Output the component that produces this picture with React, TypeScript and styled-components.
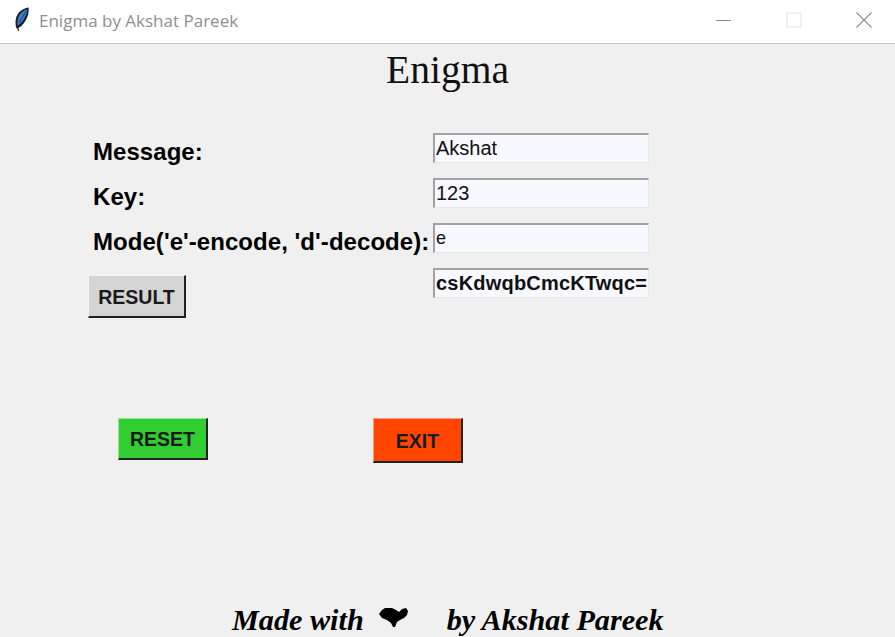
import { FC } from "react";
import styled, { createGlobalStyle } from "styled-components";

const fields = [
  { label: "Message:", value: "Akshat" },
  { label: "Key:", value: "123" },
  { label: "Mode('e'-encode, 'd'-decode):", value: "e", small: true },
];

const App: FC = () => {
  return (
    <Window>
      <GlobalStyle />
      <TitleBar>
        <Feather viewBox="0 0 14 24" aria-hidden="true">
          <path d="M2.500 20 3.500 24" stroke="#222" strokeWidth="1.200" fill="none" />
          <path d="M13.500.500C9 1 3.500 4.500 1.500 9.500.300 13 0 17.500 1.500 21.500L3.500 21C7.500 19 11 14 12.800 8.500c.7-2.500 1.200-5.500.7-8Z" fill="#1b1d26" />
          <path d="M12.300 2.500C9 3 5.200 5.800 3.500 10 2.400 12.800 2.200 15.800 2.700 18.500 6 16.500 9.300 12.500 11 8c.7-1.900 1.300-3.800 1.300-5.500Z" fill="#3d7bd0" />
          <path d="M11 4 4 16" stroke="#1c2f55" strokeWidth=".8" fill="none" />
        </Feather>
        <WindowTitle>Enigma by Akshat Pareek</WindowTitle>
        <WindowControls>
          <ControlButton>
            <svg width="16" height="16" viewBox="0 0 16 16" aria-hidden="true">
              <path d="M0 8.500H15" stroke="#8c8c8c" strokeWidth="1" />
            </svg>
          </ControlButton>
          <ControlButton>
            <svg width="16" height="16" viewBox="0 0 16 16" aria-hidden="true">
              <rect x="1" y="1" width="14" height="14" rx="1" fill="none" stroke="#e4e4e4" strokeWidth="1.200" />
            </svg>
          </ControlButton>
          <ControlButton>
            <svg width="16" height="16" viewBox="0 0 16 16" aria-hidden="true">
              <path d="M.5.500 15.500 15.500M15.500.500.500 15.500" stroke="#8c8c8c" strokeWidth="1.100" />
            </svg>
          </ControlButton>
        </WindowControls>
      </TitleBar>

      <Content>
        <Heading>Enigma</Heading>

        <Form>
          {fields.map((field) => (
            <FormRow key={field.label}>
              <FieldLabel>{field.label}</FieldLabel>
              <Field readOnly value={field.value} $small={field.small} />
            </FormRow>
          ))}
          <FormRow>
            <RaisedButton $width={98} $height={43} $bg="#d4d4d4" $light="#f4f4f4" $offset={7}>
              RESULT
            </RaisedButton>
            <ResultField readOnly value="csKdwqbCmcKTwqc=" />
          </FormRow>
        </Form>

        <ActionRow>
          <RaisedButton $width={90} $height={42} $bg="#32cd32" $light="#8fe98f">
            RESET
          </RaisedButton>
          <RaisedButton $width={90} $height={45} $bg="#ff4500" $light="#ff9c80">
            EXIT
          </RaisedButton>
        </ActionRow>

        <Footer>
          <span>Made with</span>
          <Heart viewBox="0 0 29 19" aria-hidden="true">
            <path d="M0 6 3 2 6 0H13L17 2 20 4 23 1 27 0 29 3 28 7 25 10 21 12 18 14 16 19H14L12 15 8 12 3 10Z" fill="#000" />
          </Heart>
          <span>by Akshat Pareek</span>
        </Footer>
      </Content>
    </Window>
  );
};

const GlobalStyle = createGlobalStyle`
  html, body {
    margin: 0;
    padding: 0;
    background: #f0f0f0;
  }
`;

const Window = styled.div`
  width: 895px;
  height: 637px;
  overflow: hidden;
  display: flex;
  flex-direction: column;
  background: #f0f0f0;
`;

const TitleBar = styled.div`
  height: 43px;
  flex-shrink: 0;
  display: flex;
  align-items: center;
  background: #fff;
  border-bottom: 1px solid #c8c8c8;
`;

const Feather = styled.svg`
  width: 14px;
  height: 24px;
  margin-left: 15px;
  margin-top: -5px;
`;

const WindowTitle = styled.span`
  margin-left: 10px;
  margin-top: -2px;
  font-family: "Open Sans", sans-serif;
  font-size: 17px;
  color: #8f8f8f;
`;

const WindowControls = styled.div`
  margin-left: auto;
  margin-right: -4px;
  display: flex;
`;

const ControlButton = styled.div`
  width: 70px;
  height: 16px;
  display: flex;
  justify-content: center;
  align-items: center;
  margin-top: -3px;
`;

const Content = styled.div`
  flex: 1;
  display: flex;
  flex-direction: column;
`;

const Heading = styled.h1`
  margin: 4px 0 0;
  text-align: center;
  font-family: "Liberation Serif", serif;
  font-size: 39.500px;
  line-height: 45px;
  font-weight: 400;
  color: #111;
`;

const Form = styled.div`
  margin: 40px 0 0 88px;
  display: flex;
  flex-direction: column;
`;

const FormRow = styled.div`
  height: 45px;
  display: flex;
`;

const FieldLabel = styled.label`
  width: 340px;
  margin-left: 5px;
  font-family: "Liberation Sans", sans-serif;
  font-size: 24px;
  font-weight: 700;
  letter-spacing: 0.05px;
  line-height: 38px;
  white-space: nowrap;
  color: #000;
`;

const Field = styled.input<{ $small?: boolean }>`
  box-sizing: border-box;
  width: 216px;
  height: 30px;
  padding: 0 0 0 1px;
  font-family: "Liberation Sans", sans-serif;
  font-size: ${({ $small }) => ($small ? "18px" : "20px")};
  color: #111;
  background: #f8f8ff;
  border-style: solid;
  border-width: 2px 1px 1px 2px;
  border-color: #a2a2a2 #e6e6e6 #e6e6e6 #a2a2a2;
  border-radius: 0;
  outline: none;
`;

const ResultField = styled(Field)`
  margin-left: 247px;
  font-weight: 700;
  letter-spacing: 0.2px;
`;

const RaisedButton = styled.button<{
  $width: number;
  $height: number;
  $bg: string;
  $light: string;
  $offset?: number;
}>`
  box-sizing: border-box;
  width: ${({ $width }) => $width}px;
  height: ${({ $height }) => $height}px;
  margin-top: ${({ $offset }) => $offset ?? 0}px;
  padding: 2px 0 0;
  font-family: "Liberation Sans", sans-serif;
  font-size: 19.500px;
  font-weight: 700;
  color: #1a1a1a;
  background: ${({ $bg }) => $bg};
  border-style: solid;
  border-width: 1px 2px 2px 1px;
  border-color: ${({ $light }) => $light} #222 #222 ${({ $light }) => $light};
  border-radius: 0;
`;

const ActionRow = styled.div`
  margin: 105px 0 0 118px;
  display: flex;
  align-items: flex-start;
  gap: 165px;
`;

const Footer = styled.div`
  margin-top: auto;
  height: 34px;
  padding-left: 232px;
  display: flex;
  align-items: center;
  font-family: "Liberation Serif", serif;
  font-size: 30.200px;
  font-style: italic;
  font-weight: 700;
  white-space: nowrap;
  color: #000;
`;

const Heart = styled.svg`
  width: 29px;
  height: 19px;
  margin: -6px 39px 0 15px;
`;

export default App;
